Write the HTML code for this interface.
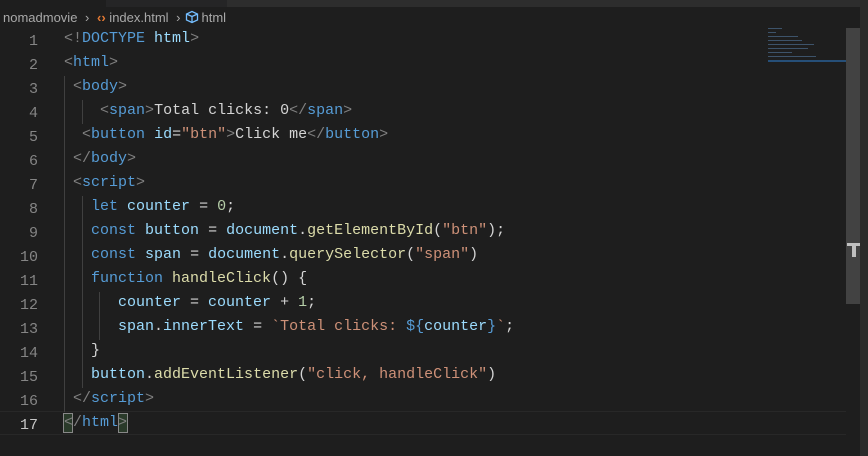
<!DOCTYPE html>
<html><head><style>
body{margin:0;width:868px;height:456px;background:#1e1e1e;overflow:hidden;position:relative;font-family:"Liberation Sans",sans-serif}
.tabs{position:absolute;left:0;top:0;width:868px;height:7px;background:#252526}
.tabs .a{position:absolute;left:0;top:0;width:106px;height:7px;background:#1e1e1e}
.tabs .b{position:absolute;left:227px;top:0;width:641px;height:7px;background:#2d2d2d}
.bc{position:absolute;left:3px;top:8px;height:19px;line-height:19px;font-size:13px;color:#a9a9a9;white-space:nowrap}
.bc .s{color:#a9a9a9;margin:0 4px}
.code{position:absolute;left:0;width:846px}
.ln{position:absolute;left:0;width:38px;text-align:right;font:15px "Liberation Mono",monospace;color:#858585}
.l{position:absolute;left:64px;height:24px;line-height:24px;font:15px "Liberation Mono",monospace;letter-spacing:0px;color:#d4d4d4;white-space:pre}
.ln{height:24px;line-height:24px}
.p{color:#808080}.t{color:#569cd6}.k{color:#569cd6}.v{color:#9cdcfe}.f{color:#dcdcaa}.s{color:#ce9178}.n{color:#b5cea8}.a{color:#9cdcfe}
.g{position:absolute;width:1px;background:#404040}
.cur{position:absolute;left:0;top:411px;width:846px;height:22px;border-top:1px solid #282828;border-bottom:1px solid #282828}
.sb{position:absolute;left:846px;top:28px;width:14px;height:276px;background:#424242}
.rb{position:absolute;left:860px;top:0;width:8px;height:456px;background:#2b2b2b}
.mm{position:absolute;left:768px;top:28px}
.mm div{height:1px;margin-bottom:3px;background:#4a6a8a;opacity:.7}
</style></head><body>
<div class="tabs"><div class="a"></div><div class="b"></div></div>
<div class="bc">nomadmovie <span class="s">›</span> <span style="color:#e37933;font-weight:bold">‹›</span> index.html <span class="s">›</span><svg width="14" height="14" viewBox="0 0 14 14" style="vertical-align:-2px;margin-right:3px"><path d="M7 1.5L12.5 4v6L7 12.5 1.5 10V4z M1.5 4L7 6.5 12.5 4 M7 6.5v6" fill="none" stroke="#75beff" stroke-width="1.3"/></svg>html</div>
<div class="cur"></div>
<div style="position:absolute;left:63px;top:413px;width:10px;height:20px;border:1px solid #888;background:#2a3a2a;box-sizing:border-box"></div>
<div style="position:absolute;left:118px;top:413px;width:10px;height:20px;border:1px solid #888;background:#2a3a2a;box-sizing:border-box"></div>
<div class="g" style="left:64px;top:76px;height:336px"></div>
<div class="g" style="left:82px;top:100px;height:24px"></div>
<div class="g" style="left:82px;top:196px;height:192px"></div>
<div class="g" style="left:99px;top:292px;height:48px"></div>
<div class="code" style="top:30px">
<div class="ln" style="top:0">1</div><div class="l" style="top:0"><span class="p">&lt;!</span><span class="t">DOCTYPE</span> <span class="a">html</span><span class="p">&gt;</span></div>
<div class="ln" style="top:24px">2</div><div class="l" style="top:24px"><span class="p">&lt;</span><span class="t">html</span><span class="p">&gt;</span></div>
<div class="ln" style="top:48px">3</div><div class="l" style="top:48px"> <span class="p">&lt;</span><span class="t">body</span><span class="p">&gt;</span></div>
<div class="ln" style="top:72px">4</div><div class="l" style="top:72px">    <span class="p">&lt;</span><span class="t">span</span><span class="p">&gt;</span>Total clicks: 0<span class="p">&lt;/</span><span class="t">span</span><span class="p">&gt;</span></div>
<div class="ln" style="top:96px">5</div><div class="l" style="top:96px">  <span class="p">&lt;</span><span class="t">button</span> <span class="a">id</span>=<span class="s">"btn"</span><span class="p">&gt;</span>Click me<span class="p">&lt;/</span><span class="t">button</span><span class="p">&gt;</span></div>
<div class="ln" style="top:120px">6</div><div class="l" style="top:120px"> <span class="p">&lt;/</span><span class="t">body</span><span class="p">&gt;</span></div>
<div class="ln" style="top:144px">7</div><div class="l" style="top:144px"> <span class="p">&lt;</span><span class="t">script</span><span class="p">&gt;</span></div>
<div class="ln" style="top:168px">8</div><div class="l" style="top:168px">   <span class="k">let</span> <span class="v">counter</span> = <span class="n">0</span>;</div>
<div class="ln" style="top:192px">9</div><div class="l" style="top:192px">   <span class="k">const</span> <span class="v">button</span> = <span class="v">document</span>.<span class="f">getElementById</span>(<span class="s">"btn"</span>);</div>
<div class="ln" style="top:216px">10</div><div class="l" style="top:216px">   <span class="k">const</span> <span class="v">span</span> = <span class="v">document</span>.<span class="f">querySelector</span>(<span class="s">"span"</span>)</div>
<div class="ln" style="top:240px">11</div><div class="l" style="top:240px">   <span class="k">function</span> <span class="f">handleClick</span>() {</div>
<div class="ln" style="top:264px">12</div><div class="l" style="top:264px">      <span class="v">counter</span> = <span class="v">counter</span> + <span class="n">1</span>;</div>
<div class="ln" style="top:288px">13</div><div class="l" style="top:288px">      <span class="v">span</span>.<span class="v">innerText</span> = <span class="s">`Total clicks: </span><span class="k">${</span><span class="v">counter</span><span class="k">}</span><span class="s">`</span>;</div>
<div class="ln" style="top:312px">14</div><div class="l" style="top:312px">   }</div>
<div class="ln" style="top:336px">15</div><div class="l" style="top:336px">   <span class="v">button</span>.<span class="f">addEventListener</span>(<span class="s">"click, handleClick"</span>)</div>
<div class="ln" style="top:360px">16</div><div class="l" style="top:360px"> <span class="p">&lt;/</span><span class="t">script</span><span class="p">&gt;</span></div>
<div class="ln" style="top:384px;color:#c6c6c6">17</div><div class="l" style="top:384px"><span class="p">&lt;/</span><span class="t">html</span><span class="p">&gt;</span></div>
</div>
<div class="mm"><div style="width:14px"></div><div style="width:8px"></div><div style="width:30px"></div><div style="width:34px"></div><div style="width:46px"></div><div style="width:40px"></div><div style="width:24px"></div><div style="width:48px"></div></div>
<div style="position:absolute;left:768px;top:60px;width:78px;height:2px;background:#264f78"></div>
<div class="sb"></div>
<div style="position:absolute;left:847px;top:243px;width:14px;height:3px;background:#c0c0c0"></div>
<div style="position:absolute;left:852px;top:243px;width:4px;height:14px;background:#c0c0c0"></div>
<div class="rb"></div>
</body></html>
